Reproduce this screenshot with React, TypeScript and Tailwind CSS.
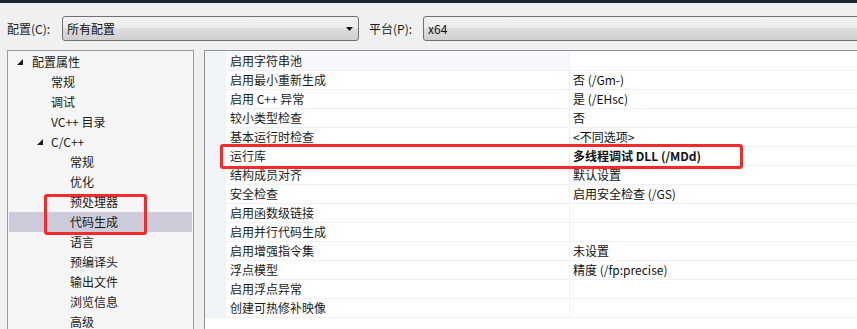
import React from "react";

const rows: { name: string; value: string; bold?: boolean }[] = [
  { name: "启用字符串池", value: "" },
  { name: "启用最小重新生成", value: "否 (/Gm-)" },
  { name: "启用 C++ 异常", value: "是 (/EHsc)" },
  { name: "较小类型检查", value: "否" },
  { name: "基本运行时检查", value: "<不同选项>" },
  { name: "运行库", value: "多线程调试 DLL (/MDd)", bold: true },
  { name: "结构成员对齐", value: "默认设置" },
  { name: "安全检查", value: "启用安全检查 (/GS)" },
  { name: "启用函数级链接", value: "" },
  { name: "启用并行代码生成", value: "" },
  { name: "启用增强指令集", value: "未设置" },
  { name: "浮点模型", value: "精度 (/fp:precise)" },
  { name: "启用浮点异常", value: "" },
  { name: "创建可热修补映像", value: "" },
];

const tree: { label: string; level: number; expand?: boolean; selected?: boolean }[] = [
  { label: "配置属性", level: 0, expand: true },
  { label: "常规", level: 1 },
  { label: "调试", level: 1 },
  { label: "VC++ 目录", level: 1 },
  { label: "C/C++", level: 1, expand: true },
  { label: "常规", level: 2 },
  { label: "优化", level: 2 },
  { label: "预处理器", level: 2 },
  { label: "代码生成", level: 2, selected: true },
  { label: "语言", level: 2 },
  { label: "预编译头", level: 2 },
  { label: "输出文件", level: 2 },
  { label: "浏览信息", level: 2 },
  { label: "高级", level: 2 },
];

function Expander() {
  return (
    <svg width="6" height="6" viewBox="0 0 6 6" className="block">
      <polygon points="6,0 6,6 0,6" fill="#1a1a1a" />
    </svg>
  );
}

function Combo({ text, arrow, className }: { text: string; arrow?: boolean; className: string }) {
  return (
    <div
      className={`h-[25px] flex items-center rounded-[3px] border border-[#707070] bg-[linear-gradient(to_bottom,#f2f2f2_0%,#ebebeb_50%,#dddddd_50%,#cfcfcf_100%)] pl-[4px] text-[12px] leading-[19px] text-[#111] ${className}`}
    >
      <span className="flex-1">{text}</span>
      {arrow && (
        <svg width="7" height="4" viewBox="0 0 7 4" className="mr-[5px]">
          <polygon points="0,0 7,0 3.5,4" fill="#111" />
        </svg>
      )}
    </div>
  );
}

export default function App() {
  return (
    <div className="relative w-[857px] h-[329px] overflow-hidden bg-[#f0f0f0] font-['Noto_Sans_CJK_SC',sans-serif] text-[12px] text-[#1a1a1a]">
      <div className="h-[3px] bg-[#1e262d]" />
      <div className="flex items-center pt-[13px] w-[1100px]">
        <span className="pl-[7px] w-[62px] leading-[19px]">配置(C):</span>
        <Combo text="所有配置" arrow className="w-[297px]" />
        <span className="ml-[10px] w-[54px] leading-[19px]">平台(P):</span>
        <Combo text="x64" className="w-[500px]" />
      </div>
      <div className="flex mt-[9px] w-[1100px]">
        <div className="ml-[7px] w-[187px] h-[300px] border border-[#9a9aa2] bg-[#f5f5f5] pt-[1px]">
          {tree.map((t, i) => (
            <div
              key={i}
              className={`mx-[1px] h-[20px] flex items-center leading-[20px] ${t.selected ? "bg-[#cbcbda]" : ""}`}
            >
              <div
                className={
                  t.level === 0 ? "w-[23px] pl-[8px]" : t.level === 1 ? "w-[42px] pl-[28px]" : "w-[61px]"
                }
              >
                {t.expand && <Expander />}
              </div>
              <span>{t.label}</span>
            </div>
          ))}
        </div>
        <div className="ml-[10px] w-[800px] h-[300px] border border-[#8e8f96] bg-white pt-[1px]">
          {rows.map((r, i) => (
            <div key={i} className="flex h-[19px]">
              <div className="w-[21px] bg-[#f0f4f9]" />
              <div
                className={`w-[344px] border-b border-r border-[#eef1f6] pl-[4px] leading-[18px] ${i === 0 ? "bg-[#f6f8fc]" : ""}`}
              >
                {r.name}
              </div>
              <div
                className={`flex-1 border-b border-[#eef1f6] pl-[3px] leading-[18px] text-[#111] ${r.bold ? "font-bold" : ""}`}
              >
                {r.value}
              </div>
            </div>
          ))}
        </div>
      </div>
      <div className="absolute left-[220px] top-[144px] w-[523px] h-[25px] border-[3px] border-[#f52a2a] rounded-[3px]" />
      <div className="absolute left-[44px] top-[194px] w-[103px] h-[41px] border-[3px] border-[#f52a2a] rounded-[3px]" />
    </div>
  );
}
